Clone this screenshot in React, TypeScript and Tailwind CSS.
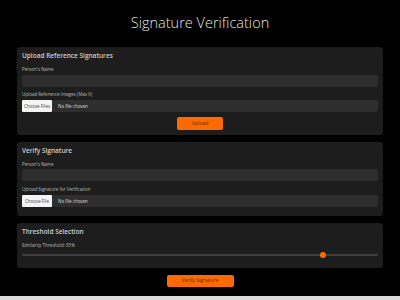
import React from "react";

const font = { fontFamily: '"Open Sans", "Liberation Sans", sans-serif' };

function FileRow({ label }: { label: string }) {
  return (
    <div className="mt-[3px] flex h-[12px] items-center rounded-[2px] bg-[#2e2e2e]">
      <div className="flex h-[12px] w-[30px] items-center justify-center rounded-[1px] bg-[#f4f4f4] text-[4.5px] text-[#444]">
        {label}
      </div>
      <span className="ml-[6px] text-[4.5px] text-[#ddd]">No file chosen</span>
    </div>
  );
}

export default function App() {
  return (
    <div className="h-[300px] w-[400px] overflow-hidden bg-black" style={font}>
      <h1 className="pt-[12px] text-center text-[14.5px] font-light leading-[22px] text-[#e0e0e0]">
        Signature Verification
      </h1>

      <div className="mx-auto mt-[13px] w-[366px]">
        {/* upload reference */}
        <div className="rounded-[3px] bg-[#1d1d1d] px-[5px] pb-[5px] pt-[4px]">
          <h2 className="text-[6.5px] font-semibold leading-[10px] text-[#cfcfcf]">
            Upload Reference Signatures
          </h2>
          <div className="mt-[5px] h-[6px] text-[4.5px] font-medium leading-[6px] text-[#bbb]">Person's Name</div>
          <div className="mt-[3px] h-[12px] rounded-[2px] bg-[#2e2e2e]" />
          <div className="mt-[4px] h-[6px] text-[4.5px] font-medium leading-[6px] text-[#bbb]">
            Upload Reference Images (Max 6)
          </div>
          <FileRow label="Choose Files" />
          <div className="mt-[5px] flex justify-center">
            <div className="flex h-[13px] w-[46px] items-center justify-center rounded-[2px] bg-[#ff6a00] text-[5px] text-[#5a2a00]">
              Upload
            </div>
          </div>
        </div>

        {/* verify */}
        <div className="mt-[7px] rounded-[3px] bg-[#1d1d1d] px-[5px] pb-[9px] pt-[4px]">
          <h2 className="text-[6.5px] font-semibold leading-[10px] text-[#cfcfcf]">Verify Signature</h2>
          <div className="mt-[5px] h-[6px] text-[4.5px] font-medium leading-[6px] text-[#bbb]">Person's Name</div>
          <div className="mt-[2px] h-[12px] rounded-[2px] bg-[#2e2e2e]" />
          <div className="mt-[5px] h-[6px] text-[4.5px] font-medium leading-[6px] text-[#bbb]">
            Upload Signature for Verification
          </div>
          <FileRow label="Choose File" />
        </div>

        {/* threshold */}
        <div className="mt-[7px] rounded-[3px] bg-[#1d1d1d] px-[5px] pb-[10px] pt-[4px]">
          <h2 className="text-[6.5px] font-semibold leading-[10px] text-[#cfcfcf]">Threshold Selection</h2>
          <div className="mt-[5px] h-[6px] text-[4.5px] font-medium leading-[6px] text-[#bbb]">
            Similarity Threshold: 85%
          </div>
          <div className="relative mt-[4px] flex h-[6px] items-center">
            <div className="h-[2px] w-full rounded-full bg-[#3e3e3e]" />
            <div
              className="absolute top-0 h-[6px] w-[6px] -translate-x-1/2 rounded-full bg-[#ff6a00]"
              style={{ left: "84.5%" }}
            />
          </div>
        </div>

        <div className="mt-[7px] flex justify-center">
          <div className="flex h-[12px] w-[67px] items-center justify-center rounded-[2px] bg-[#ff6a00] text-[5px] text-[#5a2a00]">
            Verify Signature
          </div>
        </div>
      </div>

      <div className="mt-[9px] h-[4px] w-full bg-[#dcdcdc]" />
    </div>
  );
}
